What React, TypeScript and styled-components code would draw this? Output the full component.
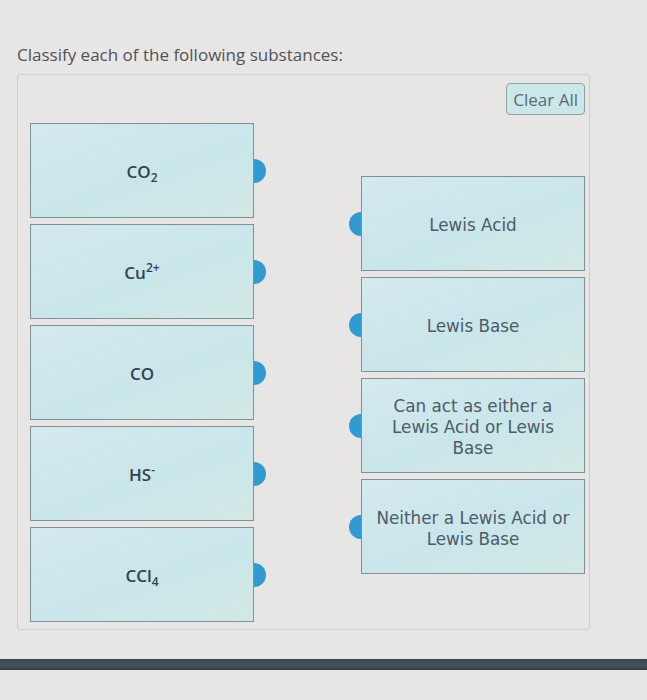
import React from "react";
import styled, { createGlobalStyle } from "styled-components";

const GlobalStyle = createGlobalStyle`
  html, body {
    margin: 0;
    padding: 0;
    background: #e8e6e5;
  }
`;

const substances = [
  { id: "co2", label: <>CO<sub>2</sub></> },
  { id: "cu", label: <>Cu<sup>2+</sup></> },
  { id: "co", label: <>CO</> },
  { id: "hs", label: <>HS<sup>-</sup></> },
  { id: "ccl4", label: <>CCl<sub>4</sub></> },
];

const categories = [
  "Lewis Acid",
  "Lewis Base",
  "Can act as either a Lewis Acid or Lewis Base",
  "Neither a Lewis Acid or Lewis Base",
];

export default function App() {
  return (
    <Page>
      <GlobalStyle />
      <Title>Classify each of the following substances:</Title>
      <Panel>
        <Toolbar>
          <ClearButton>Clear All</ClearButton>
        </Toolbar>
        <Columns>
          <Column>
            {substances.map((s) => (
              <Card key={s.id}>
                <Formula>{s.label}</Formula>
                <Knob side="right" />
              </Card>
            ))}
          </Column>
          <Column offset={53}>
            {categories.map((c) => (
              <Card key={c}>
                <Knob side="left" />
                <Category>{c}</Category>
              </Card>
            ))}
          </Column>
        </Columns>
      </Panel>
      <Divider />
    </Page>
  );
}

const Page = styled.div`
  width: 647px;
  height: 700px;
  padding-top: 43px;
  box-sizing: border-box;
  font-family: "Open Sans", "Liberation Sans", sans-serif;
  overflow: hidden;
`;

const Title = styled.h1`
  margin: 0 0 8px 17px;
  font-size: 17px;
  font-weight: 400;
  line-height: 23px;
  color: #4f5356;
`;

const Panel = styled.div`
  margin-left: 17px;
  width: 573px;
  padding: 8px 4px 7px 12px;
  box-sizing: border-box;
  border: 1px solid #cfcdcc;
  border-radius: 3px;
`;

const Toolbar = styled.div`
  display: flex;
  justify-content: flex-end;
  margin-bottom: 8px;
`;

const ClearButton = styled.button`
  height: 32px;
  padding: 0 6px;
  background: #cbe7e8;
  border: 1px solid #8ea2a6;
  border-radius: 4px;
  font-family: "Open Sans", "Liberation Sans", sans-serif;
  font-size: 17px;
  color: #5a6b76;
`;

const Columns = styled.div`
  display: flex;
  justify-content: space-between;
`;

const Column = styled.div<{ offset?: number }>`
  display: flex;
  flex-direction: column;
  gap: 6px;
  margin-top: ${(p) => p.offset ?? 0}px;
`;

const Card = styled.div`
  position: relative;
  width: 224px;
  height: 95px;
  box-sizing: border-box;
  display: flex;
  align-items: center;
  justify-content: center;
  text-align: center;
  background: linear-gradient(160deg, #d3e9ee 0%, #c9e6ea 55%, #d2e8e4 100%);
  border: 1px solid #7f9096;
`;

const Knob = styled.span<{ side: "left" | "right" }>`
  position: absolute;
  top: 50%;
  ${(p) => (p.side === "right" ? "right: -13px;" : "left: -13px;")}
  width: 12px;
  height: 24px;
  margin-top: -12px;
  background: #2f9bd0;
  border-radius: ${(p) => (p.side === "right" ? "0 12px 12px 0" : "12px 0 0 12px")};
`;

const Formula = styled.div`
  font-family: "Open Sans", "Liberation Sans", sans-serif;
  font-size: 17px;
  font-weight: 600;
  color: #34414d;
  margin-top: 2px;

  sub,
  sup {
    font-size: 12px;
    line-height: 0;
  }
`;

const Category = styled.div`
  padding: 0 12px;
  margin-top: 4px;
  font-family: "DejaVu Sans", Verdana, sans-serif;
  font-size: 16.8px;
  line-height: 21px;
  color: #4d5b66;
`;

const Divider = styled.div`
  margin-top: 29px;
  height: 11px;
  background: linear-gradient(180deg, #3a4753 0%, #45525e 60%, #2f3b46 100%);
`;
